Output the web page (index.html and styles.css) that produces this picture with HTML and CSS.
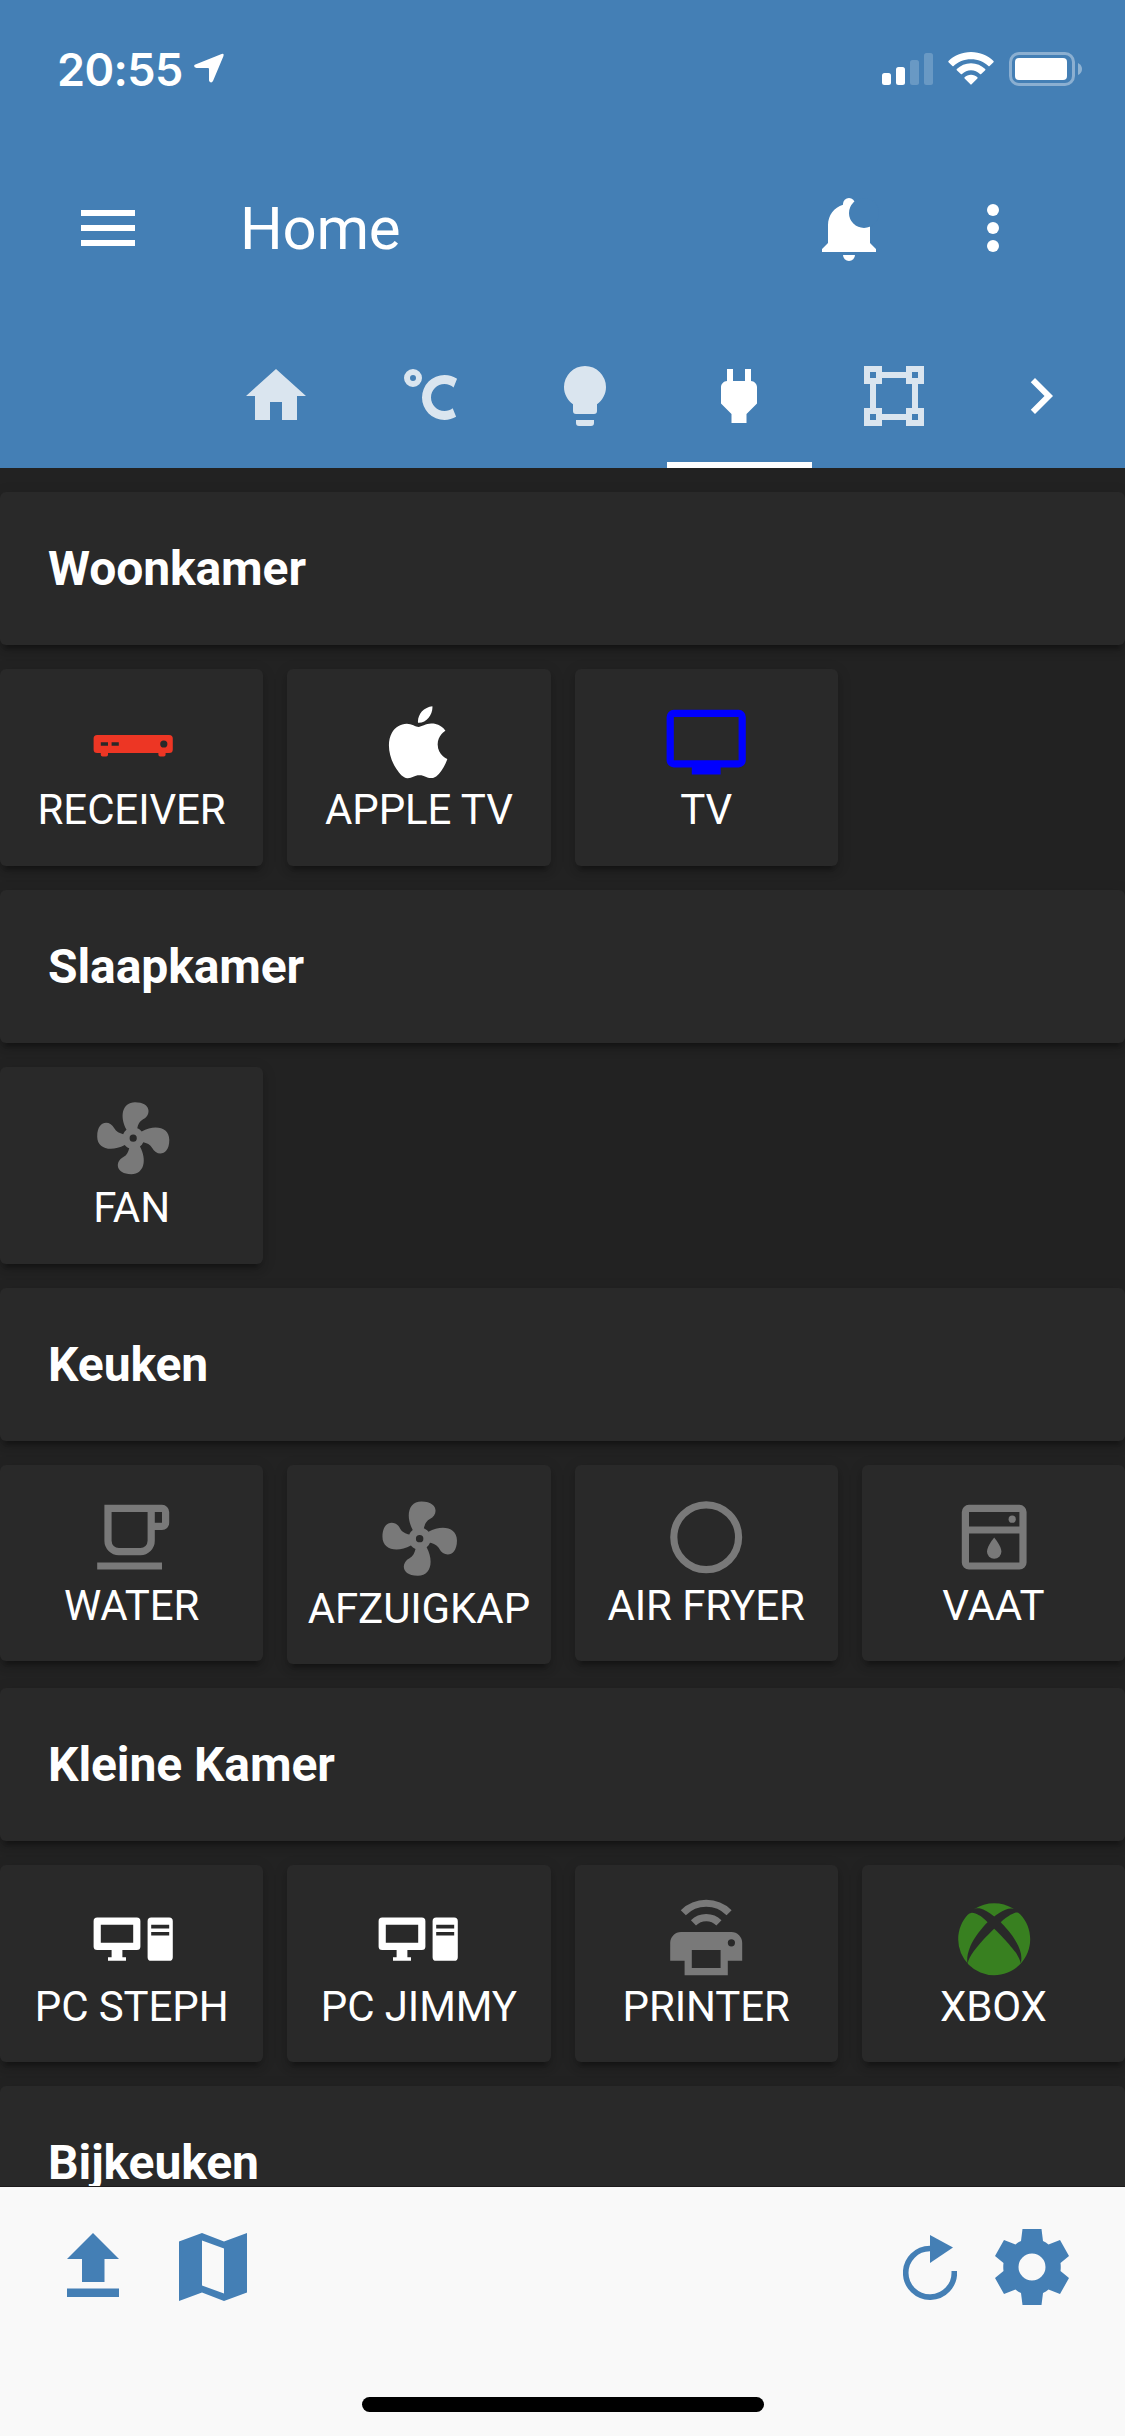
FILE: index.html
```html
<!DOCTYPE html>
<html lang="nl">
<head>
<meta charset="utf-8">
<title>Home</title>
<link rel="stylesheet" href="styles.css">
</head>
<body>
<svg class="sprite" aria-hidden="true">
  <symbol id="fan" viewBox="0 0 24 24"><path d="M12,11A1,1 0 0,0 11,12A1,1 0 0,0 12,13A1,1 0 0,0 13,12A1,1 0 0,0 12,11M12.5,2C17,2 17.11,5.57 14.75,6.75C13.76,7.24 13.32,8.29 13.13,9.22C13.61,9.42 14.03,9.73 14.35,10.13C18.05,8.13 22.03,8.92 22.03,12.5C22.03,17 18.46,17.1 17.28,14.73C16.78,13.74 15.72,13.3 14.79,13.11C14.59,13.59 14.28,14 13.88,14.34C15.87,18.03 15.08,22 11.5,22C7,22 6.91,18.42 9.27,17.24C10.25,16.75 10.69,15.71 10.89,14.79C10.4,14.59 9.97,14.27 9.65,13.87C5.96,15.85 2,15.07 2,11.5C2,7 5.56,6.89 6.74,9.26C7.24,10.25 8.29,10.68 9.22,10.87C9.41,10.39 9.73,9.97 10.14,9.65C8.15,5.96 8.94,2 12.5,2Z"/></symbol>
  <symbol id="pc" viewBox="0 0 24 24"><path fill-rule="evenodd" d="M2,6H13A1,1 0 0,1 14,7V14A1,1 0 0,1 13,15H9V17H10V18H5V17H6V15H2A1,1 0 0,1 1,14V7A1,1 0 0,1 2,6ZM3,8V13H12V8ZM17,6H22A1,1 0 0,1 23,7V17A1,1 0 0,1 22,18H17A1,1 0 0,1 16,17V7A1,1 0 0,1 17,6ZM17,8V9H22V8ZM17,10V11H22V10Z"/></symbol>
</svg>
<div class="screen">
  <header class="app-header">
    <div class="status-bar">
      <span class="clock">20:55</span>
      <svg class="location" viewBox="0 0 30 30"><path d="M27,1.2Q30.6,-.2 29.3,3.400L19,28Q17.500,30.500 15.500,28.500Q15,28 15,27V16Q15,15 14,15H2.500Q-.3,14.500 .2,12.500Q.5,11.800 2,11.200Z"/></svg>
      <svg class="signal" viewBox="0 0 51 32"><rect y="20" width="9" height="12" rx="2.500"/><rect x="14" y="14" width="9" height="18" rx="2.500"/><g opacity=".2"><rect x="28" y="7" width="9" height="25" rx="2.500"/><rect x="42" width="9" height="32" rx="2.500"/></g></svg>
      <svg class="wifi" viewBox="0 0 46 33"><path d="M23,0C32,0 40,3.500 45.500,9Q46,9.600 45.500,10.200L41.600,14Q41,14.500 40.400,14C36,9.800 30,7.200 23,7.200S10,9.800 5.600,14Q5,14.500 4.400,14L.5,10.200Q0,9.600 .5,9C6,3.500 14,0 23,0ZM23,11.200C28.500,11.200 33.500,13.500 37.200,17Q37.700,17.600 37.200,18.200L33.200,22Q32.600,22.500 32,22C29.500,19.700 26.500,18.300 23,18.300S16.500,19.700 14,22Q13.400,22.500 12.800,22L8.800,18.200Q8.300,17.600 8.800,17C12.500,13.500 17.500,11.200 23,11.200ZM23,22.700C25.500,22.700 27.800,23.700 29.400,25.200Q29.900,25.800 29.400,26.400L23.600,32.300Q23,33 22.400,32.300L16.600,26.400Q16.100,25.800 16.600,25.200C18.200,23.700 20.500,22.700 23,22.700Z"/></svg>
      <svg class="battery" viewBox="0 0 74 34"><rect x="1.500" y="1.500" width="63" height="31" rx="8.500" fill="none" stroke="#fff" stroke-width="3" opacity=".38"/><rect x="6" y="6" width="52" height="22" rx="4"/><path d="M69,11Q73,13 73,17T69,23Z" opacity=".4"/></svg>
    </div>
    <div class="toolbar">
      <svg class="icon" viewBox="0 0 24 24"><path d="M3,6H21V8H3V6M3,11H21V13H3V11M3,16H21V18H3V16Z"/></svg>
      <h1 class="title">Home</h1>
      <svg class="icon" viewBox="0 0 24 24"><path d="M21,19V20H3V19L5,17V11C5,7.900 7.030,5.170 10,4.290C10,4.190 10,4.100 10,4A2,2 0 0,1 12,2A2,2 0 0,1 14,4C14,4.100 14,4.190 14,4.290C16.970,5.170 19,7.900 19,11V17L21,19M14,21A2,2 0 0,1 12,23A2,2 0 0,1 10,21"/><circle class="bell-dot" cx="17" cy="7" r="5"/></svg>
      <svg class="icon more" viewBox="0 0 24 24"><circle cx="12" cy="6" r="2"/><circle cx="12" cy="12" r="2"/><circle cx="12" cy="18" r="2"/></svg>
    </div>
    <nav class="tabs">
      <a class="tab"><svg class="icon" viewBox="0 0 24 24"><path d="M10,20V14H14V20H19V12H22L12,3L2,12H5V20H10Z"/></svg></a>
      <a class="tab"><svg class="icon" viewBox="0 0 24 24"><path d="M16.500,5C18.050,5 19.500,5.470 20.690,6.280L19.530,9.170C18.730,8.440 17.670,8 16.500,8C14,8 12,10 12,12.500C12,15 14,17 16.500,17C17.530,17 18.470,16.660 19.230,16.080L20.370,18.930C19.240,19.610 17.920,20 16.500,20A7.500,7.500 0 0,1 9,12.500A7.500,7.500 0 0,1 16.500,5M6,3A3,3 0 0,1 9,6A3,3 0 0,1 6,9A3,3 0 0,1 3,6A3,3 0 0,1 6,3M6,5A1,1 0 0,0 5,6A1,1 0 0,0 6,7A1,1 0 0,0 7,6A1,1 0 0,0 6,5Z"/></svg></a>
      <a class="tab"><svg class="icon" viewBox="0 0 24 24"><path d="M12,2A7,7 0 0,0 5,9C5,11.380 6.190,13.470 8,14.740V17A1,1 0 0,0 9,18H15A1,1 0 0,0 16,17V14.740C17.810,13.470 19,11.380 19,9A7,7 0 0,0 12,2M9,21A1,1 0 0,0 10,22H14A1,1 0 0,0 15,21V20H9V21Z"/></svg></a>
      <a class="tab active"><svg class="icon" viewBox="0 0 24 24"><path d="M16,7V3H14V7H10V3H8V7H8C7,7 6,8 6,9V14.500L9.500,18V21H14.500V18L18,14.500V9C18,8 17,7 16,7Z"/></svg></a>
      <a class="tab"><svg class="icon" viewBox="0 0 24 24"><path d="M2,2H8V4H16V2H22V8H20V16H22V22H16V20H8V22H2V16H4V8H2V2M16,8V6H8V8H6V16H8V18H16V16H18V8H16M4,4V6H6V4H4M18,4V6H20V4H18M4,18V20H6V18H4M18,18V20H20V18H18Z"/></svg></a>
      <svg class="icon next" viewBox="0 0 24 24"><path d="M8.590,16.580L13.170,12L8.590,7.410L10,6L16,12L10,18L8.590,16.580Z"/></svg>
    </nav>
  </header>

  <main class="view">
    <h2 class="room">Woonkamer</h2>
    <div class="row row-living">
      <div class="tile"><svg class="glyph red" viewBox="0 0 24 24"><path fill-rule="evenodd" d="M2,10H22A1,1 0 0,1 23,11V14A1,1 0 0,1 22,15H21V15.500A.5,.5 0 0,1 20.500,16H19.500A.5,.5 0 0,1 19,15.500V15H5V15.500A.5,.5 0 0,1 4.500,16H3.500A.5,.5 0 0,1 3,15.500V15H2A1,1 0 0,1 1,14V11A1,1 0 0,1 2,10ZM3,12V13H5V12ZM6,12V13H8V12ZM20.500,11.500A1,1 0 0,0 20.500,13.500A1,1 0 0,0 20.500,11.500Z"/></svg><span class="label">RECEIVER</span></div>
      <div class="tile"><svg class="glyph on" viewBox="0 0 24 24"><path d="M18.710,19.500C17.880,20.740 17,21.950 15.660,21.970C14.320,22 13.890,21.180 12.370,21.180C10.840,21.180 10.370,21.950 9.100,22C7.790,22.050 6.800,20.680 5.960,19.470C4.250,17 2.940,12.450 4.700,9.390C5.570,7.870 7.130,6.910 8.820,6.880C10.100,6.860 11.320,7.750 12.110,7.750C12.890,7.750 14.370,6.680 15.920,6.840C16.570,6.870 18.390,7.100 19.560,8.820C19.470,8.880 17.390,10.100 17.410,12.630C17.440,15.650 20.060,16.660 20.090,16.670C20.060,16.740 19.670,18.110 18.710,19.500M13,3.500C13.730,2.670 14.940,2.040 15.940,2C16.070,3.170 15.600,4.350 14.900,5.190C14.210,6.040 13.070,6.700 11.950,6.610C11.800,5.460 12.360,4.260 13,3.500Z"/></svg><span class="label">APPLE TV</span></div>
      <div class="tile"><svg class="glyph blue" viewBox="0 0 24 24"><path d="M21,17H3V5H21M21,3H3A2,2 0 0,0 1,5V17A2,2 0 0,0 3,19H8V21H16V19H21A2,2 0 0,0 23,17V5A2,2 0 0,0 21,3Z"/></svg><span class="label">TV</span></div>
    </div>

    <h2 class="room">Slaapkamer</h2>
    <div class="row row-bedroom">
      <div class="tile"><svg class="glyph"><use href="#fan"/></svg><span class="label">FAN</span></div>
    </div>

    <h2 class="room">Keuken</h2>
    <div class="row row-kitchen">
      <div class="tile"><svg class="glyph" viewBox="0 0 24 24"><path d="M2,21V19H20V21H2M20,8V5H18V8H20M20,3A2,2 0 0,1 22,5V8A2,2 0 0,1 20,10H18V13A4,4 0 0,1 14,17H8A4,4 0 0,1 4,13V3H20M16,5H6V13A2,2 0 0,0 8,15H14A2,2 0 0,0 16,13V5Z"/></svg><span class="label">WATER</span></div>
      <div class="tile tall"><svg class="glyph"><use href="#fan"/></svg><span class="label">AFZUIGKAP</span></div>
      <div class="tile"><svg class="glyph" viewBox="0 0 24 24"><circle cx="12" cy="12" r="9" fill="none" stroke="currentColor" stroke-width="2"/></svg><span class="label">AIR FRYER</span></div>
      <div class="tile"><svg class="glyph" viewBox="0 0 24 24"><path fill-rule="evenodd" d="M5,3H19A2,2 0 0,1 21,5V19A2,2 0 0,1 19,21H5A2,2 0 0,1 3,19V5A2,2 0 0,1 5,3ZM5,5V9H19V5ZM5,11V19H19V11Z"/><circle cx="17" cy="7" r="1"/><path d="M12,12.100C12,12.100 14,14.500 14,16A2,2 0 0,1 10,16C10,14.500 12,12.100 12,12.100Z"/></svg><span class="label">VAAT</span></div>
    </div>

    <h2 class="room">Kleine Kamer</h2>
    <div class="row row-small">
      <div class="tile"><svg class="glyph on"><use href="#pc"/></svg><span class="label">PC STEPH</span></div>
      <div class="tile"><svg class="glyph on"><use href="#pc"/></svg><span class="label">PC JIMMY</span></div>
      <div class="tile"><svg class="glyph" viewBox="0 0 24 24"><path fill-rule="evenodd" d="M5,10H19A3,3 0 0,1 22,13V18H18V22H6V18H2V13A3,3 0 0,1 5,10ZM8,15V20H16V15ZM19,12A1,1 0 0,0 19,14A1,1 0 0,0 19,12Z"/><path d="M5.640,4.640A9,9 0 0,1 18.360,4.640M8.460,7.460A5,5 0 0,1 15.540,7.460" fill="none" stroke="currentColor" stroke-width="2"/></svg><span class="label">PRINTER</span></div>
      <div class="tile"><svg class="glyph green" viewBox="0 0 24 24"><path d="M6.430,3.720C6.500,3.660 6.570,3.600 6.620,3.560C8.180,2.550 10,2 12,2C13.880,2 15.640,2.500 17.140,3.420C17.250,3.500 17.540,3.690 17.700,3.880C16.250,2.280 12,5.700 12,5.700C10.500,4.570 9.170,3.800 8.160,3.500C7.310,3.290 6.730,3.500 6.460,3.700M19.340,5.210C19.290,5.160 19.240,5.110 19.200,5.060C18.840,4.660 18.380,4.560 18,4.590C17.610,4.710 15.900,5.320 13.800,7.310C13.800,7.310 16.170,9.610 17.620,11.960C19.070,14.310 19.930,16.160 19.400,18.730C21,16.950 22,14.590 22,12C22,9.380 21,7 19.340,5.210M15.730,12.960C15.080,12.240 14.130,11.210 12.860,9.950C12.590,9.680 12.300,9.400 12,9.100C12,9.100 11.530,9.560 10.930,10.170C10.160,10.940 9.170,11.950 8.610,12.540C7.630,13.590 4.810,16.890 4.650,18.740C4.650,18.740 4,17.280 5.400,13.890C6.300,11.680 9,8.360 10.150,7.280C10.150,7.280 9.120,6.140 7.820,5.350L7.770,5.320C7.140,4.950 6.460,4.660 5.800,4.620C5.130,4.670 4.710,5.160 4.710,5.160C3.030,6.950 2,9.350 2,12A10,10 0 0,0 12,22C14.930,22 17.570,20.740 19.400,18.730C19.400,18.730 19.190,17.400 17.840,15.500C17.530,15.070 16.370,13.690 15.730,12.960Z"/></svg><span class="label">XBOX</span></div>
    </div>

    <h2 class="room">Bijkeuken</h2>
  </main>

  <footer class="app-footer">
    <div class="actions">
      <svg class="upload" viewBox="0 0 52 64"><path d="M26,0L52,26H37.500V49H15V26H0ZM0,55.500H52V64H0Z"/></svg>
      <svg class="map" viewBox="0 0 68 68"><path fill-rule="evenodd" d="M0,8.500L23,0L45,8.500L68,0V59.500L45,68L23,59.500L0,68ZM23,7.500V52.500L45,60.500V15.500Z"/></svg>
      <svg class="refresh" viewBox="0 0 54 66"><path d="M27,13.500A24.300,24.300 0 1 0 51.300,37V36" fill="none" stroke="currentColor" stroke-width="5.600"/><path d="M27,0L50,12.500L27,28Z"/></svg>
      <svg class="gear" viewBox="0 0 74 76"><path fill-rule="evenodd" d="M27.500,0H46.500L48,12Q51,13.300 53.500,15.500L65,11L74,27L65.500,34Q66,38 65.500,42L74,49L65,65L53.500,60.500Q51,62.700 48,64L46.500,76H27.500L26,64Q23,62.700 20.500,60.500L9,65L0,49L8.500,42Q8,38 8.500,34L0,27L9,11L20.500,15.500Q23,13.300 26,12ZM37,24.500A13.500,13.500 0 0 0 37,51.500A13.500,13.500 0 0 0 37,24.500Z"/></svg>
    </div>
    <div class="home-indicator"></div>
  </footer>
</div>
</body>
</html>
```
FILE: styles.css
```css
* { box-sizing: border-box; }

body {
  margin: 0;
  background: #222;
  font-family: Roboto, "Liberation Sans", sans-serif;
  color: #fff;
}

svg { display: block; fill: currentColor; flex: none; }

.sprite { display: none; }

.screen {
  display: flex;
  flex-direction: column;
  width: 1125px;
  height: 2436px;
  overflow: hidden;
}

/* Header */
.app-header {
  flex: none;
  height: 468px;
  background: #447fb5;
}

.status-bar {
  display: flex;
  align-items: flex-start;
  height: 132px;
  padding: 52px 42px 0 57px;
}

.clock {
  width: 137px;
  font: 600 45px/35px Inter, sans-serif;
  letter-spacing: -0.6px;
}

.location { width: 30px; height: 30px; margin-top: 1px; }
.signal { width: 51px; height: 32px; margin: 1px 15px 0 auto; }
.wifi { width: 46px; height: 33px; margin-right: 15px; }
.battery { width: 74px; height: 34px; }

.toolbar {
  display: flex;
  align-items: center;
  height: 192px;
  padding: 0 96px 0 72px;
}

.icon { width: 72px; height: 72px; }
.bell-dot { fill: #447fb5; }
.more { margin-left: 72px; }

.title {
  flex: 1;
  margin: 1px 0 0 96px;
  font-size: 60px;
  font-weight: 400;
  line-height: 72px;
  letter-spacing: -0.3px;
}

.tabs {
  display: flex;
  align-items: center;
  height: 144px;
  padding-left: 204px;
}

.tab {
  display: flex;
  align-items: center;
  justify-content: center;
  width: 144.400px;
  height: 144px;
  margin-right: 10px;
  padding-top: 6px;
  border-bottom: 6px solid transparent;
  color: #dae5ef;
}

.tab.active { color: #fff; border-color: #fff; }
.next { margin-left: 29px; }

/* Dashboard */
.view {
  display: flex;
  flex: 1;
  flex-direction: column;
  gap: 24px;
  min-height: 0;
  padding-top: 24px;
  overflow: hidden;
}

.room,
.tile {
  border-radius: 6px;
  background: #292929;
  box-shadow: 0 6px 6px rgba(0, 0, 0, .14), 0 3px 15px rgba(0, 0, 0, .12), 0 9px 3px -6px rgba(0, 0, 0, .2);
}

.room {
  flex: none;
  height: 153px;
  margin: 0;
  padding: 0 48px;
  font-size: 48px;
  font-weight: 700;
  line-height: 153px;
  letter-spacing: -0.1px;
}

.row {
  display: grid;
  flex: none;
  grid-template-columns: repeat(4, 1fr);
  gap: 24px;
  align-items: start;
}

.row-living { --icon-top: 30px; }
.row-bedroom { --icon-top: 28px; }
.row-kitchen { --icon-top: 29px; }
.row-small { --icon-top: 31px; }

.tile {
  display: flex;
  flex-direction: column;
  align-items: center;
  justify-content: space-between;
  height: 197px;
  padding: var(--icon-top) 0 31px;
}

.row-kitchen .tile { height: 196px; padding-bottom: 30px; }
.row-kitchen .tall { height: 199px; }
.row-small .tile { padding-bottom: 30px; }

.glyph { width: 86.400px; height: 86.400px; color: #797979; }
.tile:first-child .glyph { margin-left: 3px; }
.tile:nth-child(2) .glyph { margin-right: 2px; }
.tile:nth-child(4) .glyph { margin-left: 2px; }
.tile.tall .glyph { width: 89.300px; height: 89.300px; margin: 0 0 0 2px; }
.glyph.on { color: #fff; }
.glyph.red { color: #ed3624; }
.glyph.blue { color: #00f; }
.glyph.green { color: #388020; }

.label {
  font-size: 42px;
  line-height: 50px;
  letter-spacing: -0.1px;
  white-space: nowrap;
}

/* Bottom bar */
.app-footer {
  display: flex;
  flex: none;
  flex-direction: column;
  align-items: center;
  justify-content: space-between;
  height: 250px;
  padding: 42px 0 24px;
  border-top: 1px solid #1c1a1b;
  background: #f9f9f9;
}

.actions {
  display: flex;
  align-items: flex-start;
  width: 100%;
  padding: 0 56px 0 67px;
  color: #447fb5;
}

.upload { width: 52px; height: 64px; margin-top: 4px; }
.map { width: 68px; height: 68px; margin: 4px 0 0 60px; }
.refresh { width: 54px; height: 66px; margin: 6px 38px 0 auto; }
.gear { width: 74px; height: 76px; }

.home-indicator {
  width: 402px;
  height: 15px;
  border-radius: 8px;
  background: #000;
}
```
